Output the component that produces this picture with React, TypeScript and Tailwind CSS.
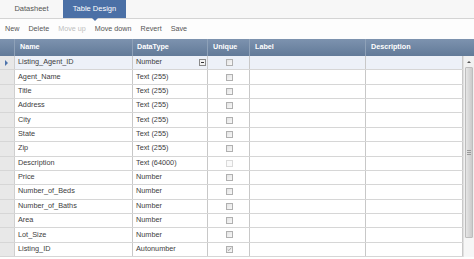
import React from "react";

const rows: { name: string; type: string; cb: "n" | "light" | "check" }[] = [
  { name: "Listing_Agent_ID", type: "Number", cb: "n" },
  { name: "Agent_Name", type: "Text (255)", cb: "n" },
  { name: "Title", type: "Text (255)", cb: "n" },
  { name: "Address", type: "Text (255)", cb: "n" },
  { name: "City", type: "Text (255)", cb: "n" },
  { name: "State", type: "Text (255)", cb: "n" },
  { name: "Zip", type: "Text (255)", cb: "n" },
  { name: "Description", type: "Text (64000)", cb: "light" },
  { name: "Price", type: "Number", cb: "n" },
  { name: "Number_of_Beds", type: "Number", cb: "n" },
  { name: "Number_of_Baths", type: "Number", cb: "n" },
  { name: "Area", type: "Number", cb: "n" },
  { name: "Lot_Size", type: "Number", cb: "n" },
  { name: "Listing_ID", type: "Autonumber", cb: "check" },
];

function Checkbox({ kind }: { kind: "n" | "light" | "check" }) {
  if (kind === "light") {
    return <div className="w-[7px] h-[7px] border border-[#dadada] bg-[#fafafa]" />;
  }
  return (
    <div className="w-[7px] h-[7px] border border-[#b0b0b0] bg-gradient-to-br from-[#e4e4e4] to-[#f8f8f8] relative">
      {kind === "check" && (
        <svg viewBox="0 0 7 7" className="absolute inset-0 w-[5px] h-[5px]">
          <path d="M1 3.5 L2.6 5 L6 1" fill="none" stroke="#8a8a8a" strokeWidth="1" />
        </svg>
      )}
    </div>
  );
}

export default function App() {
  const cols = "grid grid-cols-[15px_118px_75px_42px_116px_97px]";
  return (
    <div className="w-[474px] h-[259px] bg-white overflow-hidden font-['Liberation_Sans',Arial,sans-serif] text-[7px] text-[#444]">
      {/* Tab bar */}
      <div className="relative h-[19px] flex bg-[#f7f7f7] border-b border-[#d4d4d4]">
        <div className="w-[63px] h-[18px] flex items-center justify-center text-[7.5px] text-[#555]">Datasheet</div>
        <div className="w-[63px] h-[18px] flex items-center justify-center text-[7.5px] text-white bg-[#4b70a6]">Table Design</div>
        <div className="absolute left-[92px] top-[18px] w-0 h-0 border-l-[3px] border-r-[3px] border-t-[3px] border-l-transparent border-r-transparent border-t-[#4b70a6]" />
      </div>
      {/* Toolbar */}
      <div className="h-[20px] flex items-center gap-[9px] pl-[5px] text-[7.2px] text-[#555] bg-[#fdfdfd]">
        <span>New</span>
        <span>Delete</span>
        <span className="text-[#bdbdbd]">Move up</span>
        <span>Move down</span>
        <span>Revert</span>
        <span>Save</span>
      </div>
      {/* Header */}
      <div className="h-[17px] flex bg-gradient-to-b from-[#7d93af] to-[#627a98] text-white font-bold text-[7.2px]">
        <div className={`${cols} w-[463px]`}>
          <div className="border-r border-[#8ea1b8]" />
          <div className="border-r border-[#8ea1b8] flex items-center pl-[5px]">Name</div>
          <div className="border-r border-[#8ea1b8] flex items-center pl-[4px]">DataType</div>
          <div className="border-r border-[#8ea1b8] flex items-center pl-[5px]">Unique</div>
          <div className="border-r border-[#8ea1b8] flex items-center pl-[5px]">Label</div>
          <div className="flex items-center pl-[5px]">Description</div>
        </div>
        <div className="w-[11px]" />
      </div>
      {/* Body */}
      <div className="flex h-[201px]">
        <div className="w-[463px] flex flex-col">
          {rows.map((r, i) => (
            <div
              key={r.name}
              className={`${cols} h-[14.36px] border-b border-[#d6d6d6] text-[7.3px] ${i === 0 ? "bg-[#edf1f8]" : "bg-white"}`}
            >
              <div className="bg-[#e8e8e8] border-r border-[#cfcfcf] flex items-center pl-[5px]">
                {i === 0 && (
                  <div className="w-0 h-0 border-t-[3px] border-b-[3px] border-l-[3px] border-t-transparent border-b-transparent border-l-[#4f74ab]" />
                )}
              </div>
              <div className="border-r border-[#c8c8c8] flex items-center pl-[3px] text-[#404040]">{r.name}</div>
              <div className="border-r border-[#c8c8c8] flex items-center pl-[3px] pr-[1px] justify-between text-[#404040]">
                <span>{r.type}</span>
                {i === 0 && (
                  <div className="w-[7px] h-[7px] border border-[#8a8a8a] bg-[#f2f2f2] flex items-center justify-center">
                    <div className="w-[3px] h-[1px] bg-[#333]" />
                  </div>
                )}
              </div>
              <div className="border-r border-[#c8c8c8] flex items-center justify-center pl-[1px]">
                <Checkbox kind={r.cb} />
              </div>
              <div className="border-r border-[#c8c8c8]" />
              <div className="border-r border-[#c8c8c8]" />
            </div>
          ))}
        </div>
        {/* Scrollbar */}
        <div className="w-[11px] flex flex-col bg-[#f1f1f1] border-l border-[#e0e0e0]">
          <div className="h-[11px] flex items-center justify-center">
            <div className="w-0 h-0 border-l-[2px] border-r-[2px] border-b-[2px] border-l-transparent border-r-transparent border-b-[#555]" />
          </div>
          <div className="h-[171px] mx-[1px] rounded-[1px] border border-[#bdbdbd] bg-gradient-to-r from-[#e6e6e6] via-[#d8d8d8] to-[#cbcbcb] flex items-center justify-center">
            <div className="flex flex-col gap-[1px]">
              <div className="w-[4px] h-[1px] bg-[#9a9a9a]" />
              <div className="w-[4px] h-[1px] bg-[#9a9a9a]" />
              <div className="w-[4px] h-[1px] bg-[#9a9a9a]" />
            </div>
          </div>
          <div className="flex-1 bg-[#f6f6f6]" />
        </div>
      </div>
    </div>
  );
}
